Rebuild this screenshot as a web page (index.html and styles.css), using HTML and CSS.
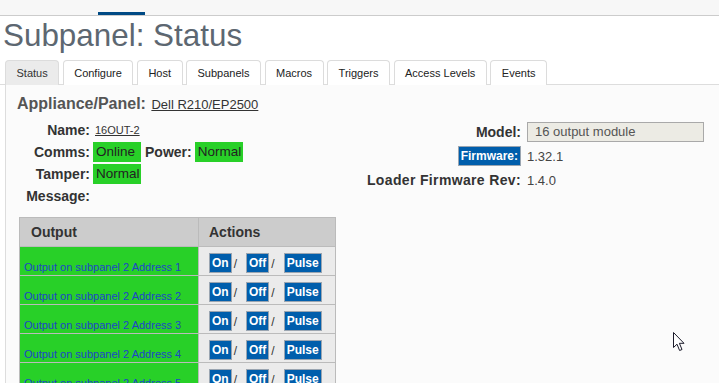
FILE: index.html
```html
<!DOCTYPE html>
<html>
<head>
<meta charset="utf-8">
<link rel="stylesheet" href="styles.css">
</head>
<body>
<div class="topbar"><div class="topbar-ind"></div></div>
<h1 class="title">Subpanel: Status</h1>
<ul class="tabs">
  <li class="tab active">Status</li>
  <li class="tab">Configure</li>
  <li class="tab">Host</li>
  <li class="tab">Subpanels</li>
  <li class="tab">Macros</li>
  <li class="tab">Triggers</li>
  <li class="tab">Access Levels</li>
  <li class="tab">Events</li>
</ul>
<div class="panel">
  <div class="appl"><span class="appl-label">Appliance/Panel:</span> <a class="appl-link" href="#">Dell R210/EP2500</a></div>
  <div class="info">
    <div class="info-left">
      <span class="lbl">Name:</span><span class="val"><a class="name-link" href="#">16OUT-2</a></span>
      <span class="lbl">Comms:</span><span class="val"><span class="ok wide">Online</span><span class="lbl inline">Power:</span><span class="ok">Normal</span></span>
      <span class="lbl">Tamper:</span><span class="val"><span class="ok wide">Normal</span></span>
      <span class="lbl">Message:</span><span class="val"></span>
    </div>
    <div class="info-right">
      <span class="lbl">Model:</span><span class="val"><span class="model-box">16 output module</span></span>
      <span class="lbl"><span class="btn fw">Firmware:</span></span><span class="val txt">1.32.1</span>
      <span class="lbl wide-lbl">Loader Firmware Rev:</span><span class="val txt">1.4.0</span>
    </div>
  </div>
  <table class="outputs">
    <thead>
      <tr><th class="c1">Output</th><th class="c2">Actions</th></tr>
    </thead>
    <tbody>
      <tr><td class="out"><a href="#">Output on subpanel 2 Address 1</a></td><td class="act"><span class="btn">On</span><span class="sep">/</span><span class="btn">Off</span><span class="sep">/</span><span class="btn">Pulse</span></td></tr>
      <tr><td class="out"><a href="#">Output on subpanel 2 Address 2</a></td><td class="act"><span class="btn">On</span><span class="sep">/</span><span class="btn">Off</span><span class="sep">/</span><span class="btn">Pulse</span></td></tr>
      <tr><td class="out"><a href="#">Output on subpanel 2 Address 3</a></td><td class="act"><span class="btn">On</span><span class="sep">/</span><span class="btn">Off</span><span class="sep">/</span><span class="btn">Pulse</span></td></tr>
      <tr><td class="out"><a href="#">Output on subpanel 2 Address 4</a></td><td class="act"><span class="btn">On</span><span class="sep">/</span><span class="btn">Off</span><span class="sep">/</span><span class="btn">Pulse</span></td></tr>
      <tr><td class="out"><a href="#">Output on subpanel 2 Address 5</a></td><td class="act"><span class="btn">On</span><span class="sep">/</span><span class="btn">Off</span><span class="sep">/</span><span class="btn">Pulse</span></td></tr>
    </tbody>
  </table>
</div>
<svg class="cursor" width="13" height="20" viewBox="0 0 13 20"><path d="M0.5 0.5 L0.5 15.5 L4 12.2 L6.6 18.5 L9 17.5 L6.4 11.3 L11 11.3 Z" fill="#fff" stroke="#1a1a2a" stroke-width="1"/></svg>
</body>
</html>
```
FILE: styles.css
```css
html, body {
  margin: 0;
  padding: 0;
  background: #fff;
  font-family: "Liberation Sans", Arial, sans-serif;
  color: #333;
  overflow: hidden;
  height: 383px;
}
.topbar {
  height: 15px;
  background: #f7f7f7;
  border-bottom: 1px solid #cccccc;
  position: relative;
}
.topbar-ind {
  position: absolute;
  left: 98px;
  bottom: 0;
  width: 47px;
  height: 3px;
  background: #004a85;
}
.title {
  margin: 3px 0 0 3px;
  font-size: 31.4px;
  line-height: 34px;
  font-weight: normal;
  color: #5d6771;
}
.tabs {
  list-style: none;
  margin: 7px 0 0 0;
  padding: 0 0 0 5px;
  display: flex;
  border-bottom: 1px solid #dddddd;
  height: 24px;
}
.tab {
  box-sizing: border-box;
  height: 25px;
  padding: 0 10.5px;
  margin-right: 3.5px;
  border: 1px solid #dcdcdc;
  border-bottom: none;
  border-radius: 4px 4px 0 0;
  background: #fff;
  font-size: 11px;
  line-height: 25px;
  color: #222;
}
.tab.active {
  background: #ebebeb;
  color: #333;
}
.panel {
  margin-left: 5px;
  border-left: 1px solid #dddddd;
  background: #fbfbfb;
  padding: 8px 0 0 11px;
  height: 400px;
}
.appl {
  height: 22px;
  line-height: 22px;
  margin-bottom: 4px;
}
.appl-label {
  font-size: 16px;
  font-weight: bold;
  color: #555;
}
.appl-link {
  font-size: 13px;
  color: #333;
  text-decoration: underline;
  margin-left: 1px;
}
.info {
  display: flex;
  align-items: flex-start;
}
.info-left {
  display: grid;
  grid-template-columns: 73px auto;
  grid-auto-rows: 22px;
  column-gap: 3px;
  align-items: center;
}
.lbl {
  font-size: 14px;
  font-weight: bold;
  color: #333;
  text-align: right;
  white-space: nowrap;
}
.lbl.wide-lbl {
  letter-spacing: 0.35px;
}
.lbl.inline {
  margin: 0 3px 0 4px;
}
.val {
  display: flex;
  align-items: center;
  font-size: 13px;
}
.name-link {
  font-size: 11px;
  color: #333;
  text-decoration: underline;
  margin-left: 2px;
}
.ok {
  display: inline-block;
  background: #28d028;
  color: #222;
  font-size: 13.5px;
  line-height: 20px;
  padding: 0 2px 0 3px;
}
.ok.wide {
  width: 43px;
}
.info-right {
  margin-left: auto;
  margin-right: 15px;
  margin-top: 3px;
  display: grid;
  grid-template-columns: auto 177px;
  grid-auto-rows: 20px;
  row-gap: 4px;
  column-gap: 6px;
  align-items: center;
}
.info-right .lbl {
  justify-self: end;
}
.model-box {
  box-sizing: border-box;
  width: 177px;
  height: 20px;
  background: #ecebe4;
  border: 1px solid #a9a9a9;
  color: #555;
  font-size: 13px;
  line-height: 18px;
  padding-left: 7px;
}
.txt {
  color: #444;
  font-size: 13px;
}
.btn {
  display: inline-block;
  box-sizing: border-box;
  height: 20px;
  line-height: 18px;
  padding: 0 2px;
  background: #005eac;
  border: 1px solid #9aa5b1;
  color: #fff;
  font-size: 12px;
  font-weight: bold;
}
.outputs {
  margin: 10px 0 0 2px;
  border-collapse: collapse;
  border: 1px solid #bbbbbb;
}
.outputs th {
  height: 28px;
  padding: 0;
  background: #cccccc;
  border: 1px solid #bbbbbb;
  text-align: left;
  font-size: 14px;
  font-weight: bold;
  color: #333;
}
.outputs th.c1 {
  width: 167px;
  padding-left: 11px;
}
.outputs th.c2 {
  width: 126px;
  padding-left: 10px;
}
.outputs td {
  height: 29px;
  padding: 0;
  border: 1px solid #bbbbbb;
  box-sizing: border-box;
}
.outputs td.out {
  background: #28d028;
  vertical-align: bottom;
  padding: 0 0 1px 4px;
  font-size: 11px;
  line-height: 14px;
}
.outputs td.out a {
  color: #1d45c8;
  text-decoration: none;
}
.outputs td.act {
  background: #ebebeb;
  vertical-align: bottom;
  padding: 0 0 2px 10px;
  white-space: nowrap;
  font-size: 0;
}
.act .btn {
  vertical-align: bottom;
}
.sep {
  display: inline-block;
  font-size: 12px;
  color: #333;
  margin: 0 9px 0 2px;
  line-height: 18px;
  vertical-align: bottom;
}
.cursor {
  position: absolute;
  left: 673px;
  top: 332px;
}
```
